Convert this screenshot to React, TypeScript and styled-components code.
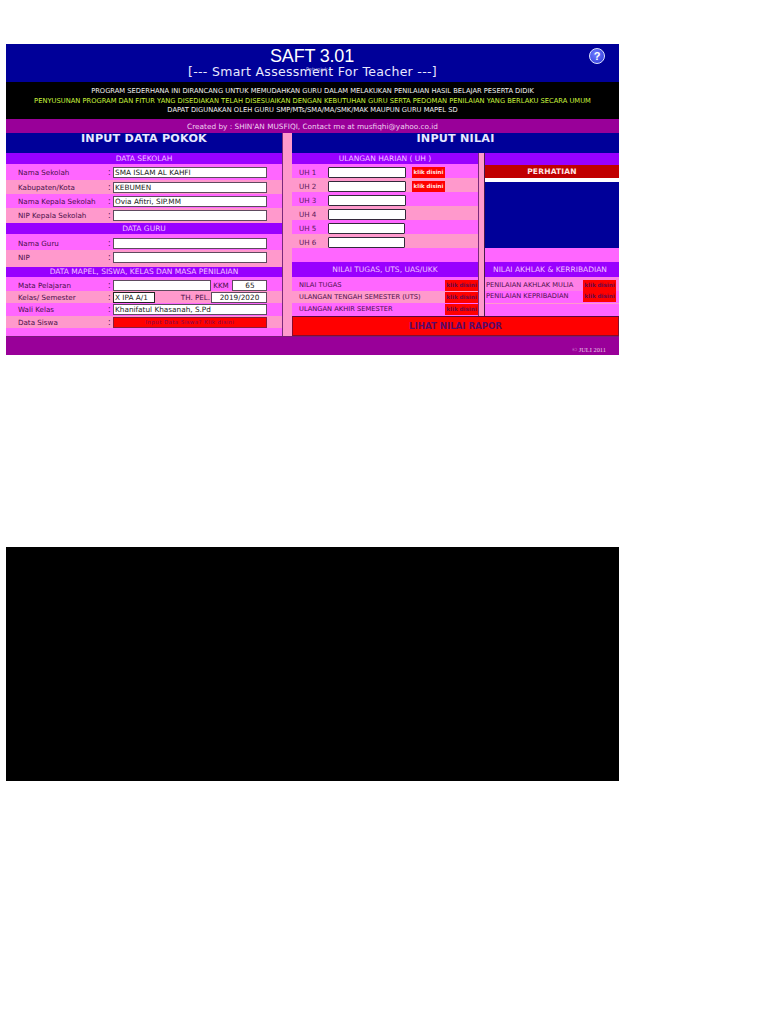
import styled, { createGlobalStyle } from 'styled-components'

const GlobalStyle = createGlobalStyle`
  html, body {
    margin: 0;
    background: #fff;
  }
  * {
    box-sizing: border-box;
  }
`

const PINK = '#ff66ff'
const ROSE = '#ff99cc'
const VIOLET = '#9900ff'
const NAVY = '#000099'
const PURPLE = '#990099'
const RED = '#ff0000'

const schoolRows = [
  { label: 'Nama Sekolah', value: 'SMA ISLAM AL KAHFI', h: 16, top: 3 },
  { label: 'Kabupaten/Kota', value: 'KEBUMEN', h: 14, top: 2 },
  { label: 'Nama Kepala Sekolah', value: 'Ovia Afitri, SIP.MM', h: 14, top: 2 },
  { label: 'NIP Kepala Sekolah', value: '', h: 15, top: 2 },
]
const uhRows = ['UH 1', 'UH 2', 'UH 3', 'UH 4', 'UH 5', 'UH 6']
const taskRows = [
  { name: 'NILAI TUGAS', h: 14 },
  { name: 'ULANGAN TENGAH SEMESTER (UTS)', h: 12 },
  { name: 'ULANGAN AKHIR SEMESTER', h: 12 },
]
const attitudeRows = [
  { name: 'PENILAIAN AKHLAK MULIA', h: 14 },
  { name: 'PENILAIAN KEPRIBADIAN', h: 13 },
]

const App = () => {
  return (
    <Page>
      <GlobalStyle />
      <Sheet>
        <Header>
          <Title>SAFT 3.01</Title>
          <Subtitle>[--- Smart Assessment For Teacher ---]</Subtitle>
          <HelpHint>Petunjuk</HelpHint>
          <HelpBadge>?</HelpBadge>
        </Header>
        <Notice>
          <div>PROGRAM SEDERHANA INI DIRANCANG UNTUK MEMUDAHKAN GURU DALAM MELAKUKAN PENILAIAN HASIL BELAJAR PESERTA DIDIK</div>
          <NoticeLime>PENYUSUNAN PROGRAM DAN FITUR YANG DISEDIAKAN TELAH DISESUAIKAN DENGAN KEBUTUHAN GURU SERTA PEDOMAN PENILAIAN YANG BERLAKU SECARA UMUM</NoticeLime>
          <div>DAPAT DIGUNAKAN OLEH GURU SMP/MTs/SMA/MA/SMK/MAK MAUPUN GURU MAPEL SD</div>
        </Notice>
        <Credit>Created by : SHIN'AN MUSFIQI, Contact me at musfiqhi@yahoo.co.id</Credit>
        <Body>
          <LeftPanel>
            <PanelTitle>INPUT DATA POKOK</PanelTitle>
            <Band $h={11}>DATA SEKOLAH</Band>
            {schoolRows.map((row, i) => (
              <FormRow key={row.label} $h={row.h} $top={row.top} $alt={i % 2 === 1}>
                <RowLabel>{row.label}</RowLabel>
                <Colon>:</Colon>
                <Field>{row.value}</Field>
              </FormRow>
            ))}
            <Band $h={11}>DATA GURU</Band>
            <FormRow $h={16} $top={4}>
              <RowLabel>Nama Guru</RowLabel>
              <Colon>:</Colon>
              <Field />
            </FormRow>
            <FormRow $h={17} $top={2} $alt>
              <RowLabel>NIP</RowLabel>
              <Colon>:</Colon>
              <Field />
            </FormRow>
            <Band $h={10}>DATA MAPEL, SISWA, KELAS DAN MASA PENILAIAN</Band>
            <FormRow $h={14} $top={3}>
              <RowLabel>Mata Pelajaran</RowLabel>
              <Colon>:</Colon>
              <Field $w={98} />
              <InlineLabel $w={21}>KKM</InlineLabel>
              <Field $w={35} $center>65</Field>
            </FormRow>
            <FormRow $h={12} $top={1} $alt>
              <RowLabel>Kelas/ Semester</RowLabel>
              <Colon>:</Colon>
              <Field $w={42} $dark>X IPA A/1</Field>
              <InlineLabel $w={56} $right>TH. PEL.</InlineLabel>
              <Field $w={56} $center>2019/2020</Field>
            </FormRow>
            <FormRow $h={13} $top={1}>
              <RowLabel>Wali Kelas</RowLabel>
              <Colon>:</Colon>
              <Field>Khanifatul Khasanah, S.Pd</Field>
            </FormRow>
            <FormRow $h={12} $top={1} $alt>
              <RowLabel>Data Siswa</RowLabel>
              <Colon>:</Colon>
              <RedField>Input Data Siswa? Klik disini</RedField>
            </FormRow>
            <Spacer $h={8} />
          </LeftPanel>
          <Divider />
          <RightPanel>
            <PanelTitle>INPUT NILAI</PanelTitle>
            <RightColumns>
              <ScoreColumn>
                <Band $h={11}>ULANGAN HARIAN ( UH )</Band>
                {uhRows.map((uh, i) => (
                  <UhRow key={uh} $alt={i % 2 === 1}>
                    <UhLabel>{uh}</UhLabel>
                    <UhField $narrow={i > 3} />
                    {i < 2 && <ClickTag>klik disini</ClickTag>}
                  </UhRow>
                ))}
                <Spacer $h={14} />
                <Band $h={15}>NILAI TUGAS, UTS, UAS/UKK</Band>
                {taskRows.map((task, i) => (
                  <TaskRow key={task.name} $h={task.h} $alt={i === 1}>
                    <RowName>{task.name}</RowName>
                    <DarkTag>klik disini</DarkTag>
                  </TaskRow>
                ))}
              </ScoreColumn>
              <InnerDivider />
              <AttitudeColumn>
                <Band $h={12} />
                <WarningTitle>PERHATIAN</WarningTitle>
                <WarningRule />
                <WarningBody />
                <Spacer $h={14} />
                <AttitudeBand $h={15}>NILAI AKHLAK &amp; KERRIBADIAN</AttitudeBand>
                {attitudeRows.map((item, i) => (
                  <AttitudeRow key={item.name} $h={item.h} $alt={i === 0} $rule={i === 1}>
                    <RowName>{item.name}</RowName>
                    <DarkTag>klik disini</DarkTag>
                  </AttitudeRow>
                ))}
              </AttitudeColumn>
            </RightColumns>
            <ReportButton>LIHAT NILAI RAPOR</ReportButton>
          </RightPanel>
        </Body>
        <Footer>
          <FooterMark>© JULI 2011</FooterMark>
        </Footer>
      </Sheet>
      <BlackBlock />
    </Page>
  )
}

export default App

const Page = styled.div`
  width: 768px;
  height: 1024px;
  padding: 44px 149px 0 6px;
  background: #fff;
  overflow: hidden;
  font-family: 'DejaVu Sans', Verdana, sans-serif;
`

const Sheet = styled.div`
  width: 613px;
  height: 311px;
  display: flex;
  flex-direction: column;
`

const Header = styled.header`
  position: relative;
  height: 38px;
  background: ${NAVY};
  color: #fff;
  text-align: center;
  padding-top: 3px;
`

const Title = styled.div`
  font-family: 'Liberation Sans', Arial, sans-serif;
  font-size: 18px;
  line-height: 18px;
  letter-spacing: -0.2px;
  padding-right: 1px;
`

const Subtitle = styled.div`
  font-size: 12.5px;
  line-height: 14px;
  letter-spacing: 0.3px;
  color: #e8e8ff;
`

const HelpHint = styled.div`
  position: absolute;
  top: 22px;
  left: 300px;
  color: #c8c8e8;
  font-size: 5px;
  line-height: 6px;
`

const HelpBadge = styled.div`
  position: absolute;
  top: 4px;
  right: 14px;
  width: 16px;
  height: 16px;
  border-radius: 50%;
  border: 1px solid #dfe6ff;
  background: radial-gradient(circle at 40% 35%, #6f7cff, #2a35d8);
  color: #fff;
  font: bold 11px/14px 'Liberation Sans', Arial, sans-serif;
`

const Notice = styled.div`
  height: 37px;
  background: #000;
  color: #eee;
  font-size: 6.72px;
  line-height: 9.5px;
  padding-top: 5px;
  text-align: center;
  white-space: nowrap;
`

const NoticeLime = styled.div`
  color: #c6ef3c;
`

const Credit = styled.div`
  height: 14px;
  background: ${PURPLE};
  color: #f0d0f0;
  font-size: 7.33px;
  line-height: 15px;
  text-align: center;
`

const Body = styled.div`
  display: flex;
  height: 203px;
`

const LeftPanel = styled.section`
  width: 276px;
  display: flex;
  flex-direction: column;
`

const Divider = styled.div`
  width: 10px;
  background: ${ROSE};
  border-left: 1px solid #7a2a7a;
`

const RightPanel = styled.section`
  width: 327px;
  display: flex;
  flex-direction: column;
`

const PanelTitle = styled.h2`
  margin: 0;
  height: 20px;
  flex: none;
  background: ${NAVY};
  color: #e8e8ff;
  font: bold 11.2px/11px 'DejaVu Sans', Verdana, sans-serif;
  letter-spacing: 0.2px;
  text-align: center;
`

const Band = styled.div<{ $h: number }>`
  height: ${p => p.$h}px;
  flex: none;
  background: ${VIOLET};
  color: #f3c4ff;
  font-size: 7.5px;
  line-height: ${p => p.$h}px;
  text-align: center;
  white-space: nowrap;
`

const AttitudeBand = styled(Band)`
  padding-right: 4px;
`

const Spacer = styled.div<{ $h: number }>`
  height: ${p => p.$h}px;
  flex: none;
  background: ${PINK};
`

const FormRow = styled.div<{ $h: number; $top: number; $alt?: boolean }>`
  height: ${p => p.$h}px;
  flex: none;
  display: flex;
  align-items: flex-start;
  padding: ${p => p.$top}px 0 0 12px;
  background: ${p => (p.$alt ? ROSE : PINK)};
`

const RowLabel = styled.div`
  width: 90px;
  color: #4a104a;
  font-size: 7.15px;
  line-height: 11px;
  white-space: nowrap;
`

const Colon = styled.div`
  width: 5px;
  color: #4a104a;
  font-size: 8px;
  line-height: 11px;
`

const Field = styled.div<{ $w?: number; $center?: boolean; $dark?: boolean }>`
  width: ${p => (p.$w ? `${p.$w}px` : '154px')};
  height: 11px;
  flex: none;
  background: #fff;
  border: 1px solid ${p => (p.$dark ? '#222' : '#5e4a5e')};
  color: #222;
  font-size: 7.3px;
  line-height: 9px;
  padding-left: 1px;
  text-align: ${p => (p.$center ? 'center' : 'left')};
  white-space: nowrap;
  overflow: hidden;
`

const InlineLabel = styled.div<{ $w: number; $right?: boolean }>`
  width: ${p => p.$w}px;
  flex: none;
  color: #4a104a;
  font-size: 7.15px;
  line-height: 11px;
  text-align: ${p => (p.$right ? 'right' : 'center')};
  padding-right: 1px;
`

const RedField = styled.div`
  width: 154px;
  height: 11px;
  background: ${RED};
  border: 1px solid #8a1a3a;
  color: #7a0a5a;
  font-size: 5.4px;
  line-height: 8px;
  text-align: center;
  letter-spacing: 0.45px;
`

const RightColumns = styled.div`
  display: flex;
  height: 163px;
  flex: none;
`

const ScoreColumn = styled.div`
  width: 186px;
  display: flex;
  flex-direction: column;
  background: ${PINK};
`

const InnerDivider = styled.div`
  width: 7px;
  background: ${ROSE};
  border-left: 1px solid #7a2a7a;
  border-right: 1px solid #4a1a4a;
`

const AttitudeColumn = styled.div`
  width: 134px;
  display: flex;
  flex-direction: column;
  background: ${PINK};
`

const UhRow = styled.div<{ $alt?: boolean }>`
  height: 14px;
  flex: none;
  display: flex;
  align-items: flex-end;
  padding-left: 7px;
  background: ${p => (p.$alt ? ROSE : PINK)};
`

const UhLabel = styled.div`
  width: 29px;
  color: #5a1a5a;
  font-size: 7.15px;
  line-height: 11px;
`

const UhField = styled.div<{ $narrow?: boolean }>`
  width: ${p => (p.$narrow ? 77 : 78)}px;
  height: 11px;
  background: #fff;
  border: 1px solid #33283a;
  border-radius: 1px;
`

const ClickTag = styled.div`
  width: 33px;
  height: 11px;
  margin-left: 6px;
  background: ${RED};
  color: #ffe6e6;
  font: bold 5.5px/11px 'DejaVu Sans', Verdana, sans-serif;
  text-align: center;
`

const WarningTitle = styled.div`
  height: 13px;
  flex: none;
  background: #c00000;
  color: #ffe6e6;
  font: bold 7.5px/13px 'DejaVu Sans', Verdana, sans-serif;
  text-align: center;
  letter-spacing: 0.2px;
`

const WarningRule = styled.div`
  height: 4px;
  flex: none;
  background: #fff;
`

const WarningBody = styled.div`
  height: 66px;
  flex: none;
  background: ${NAVY};
`

const TaskRow = styled.div<{ $h: number; $alt?: boolean }>`
  height: ${p => p.$h}px;
  flex: none;
  display: flex;
  align-items: flex-end;
  justify-content: space-between;
  padding-left: 7px;
  background: ${p => (p.$alt ? ROSE : PINK)};
`

const RowName = styled.div`
  color: #4a104a;
  font-size: 6.7px;
  line-height: 11px;
  white-space: nowrap;
`

const DarkTag = styled.div`
  width: 33px;
  height: 11px;
  flex: none;
  background: ${RED};
  color: #6a0a4a;
  font: bold 5.6px/11px 'DejaVu Sans', Verdana, sans-serif;
  text-align: center;
`

const AttitudeRow = styled.div<{ $h: number; $alt?: boolean; $rule?: boolean }>`
  height: ${p => p.$h}px;
  flex: none;
  display: flex;
  align-items: flex-end;
  justify-content: space-between;
  padding: 0 3px ${p => (p.$rule ? 1 : 0)}px 1px;
  background: ${p => (p.$alt ? '#ff80e6' : PINK)};
  border-bottom: ${p => (p.$rule ? `1px solid ${ROSE}` : 'none')};
`

const ReportButton = styled.div`
  height: 20px;
  flex: none;
  background: ${RED};
  border: 1px solid #8a0a2a;
  border-top-color: #5a0a3a;
  color: #5a0a6a;
  font: bold 8.6px/18px 'DejaVu Sans', Verdana, sans-serif;
  text-align: center;
`

const Footer = styled.footer`
  height: 19px;
  flex: none;
  display: flex;
  align-items: flex-end;
  justify-content: flex-end;
  padding: 0 13px 1px 0;
  background: ${PURPLE};
  border-top: 1px solid #7a1a7a;
`

const FooterMark = styled.div`
  color: #e8c8e8;
  font-family: 'Liberation Serif', serif;
  font-size: 6.4px;
  line-height: 8px;
`

const BlackBlock = styled.div`
  width: 613px;
  height: 234px;
  margin-top: 192px;
  background: #000;
`
